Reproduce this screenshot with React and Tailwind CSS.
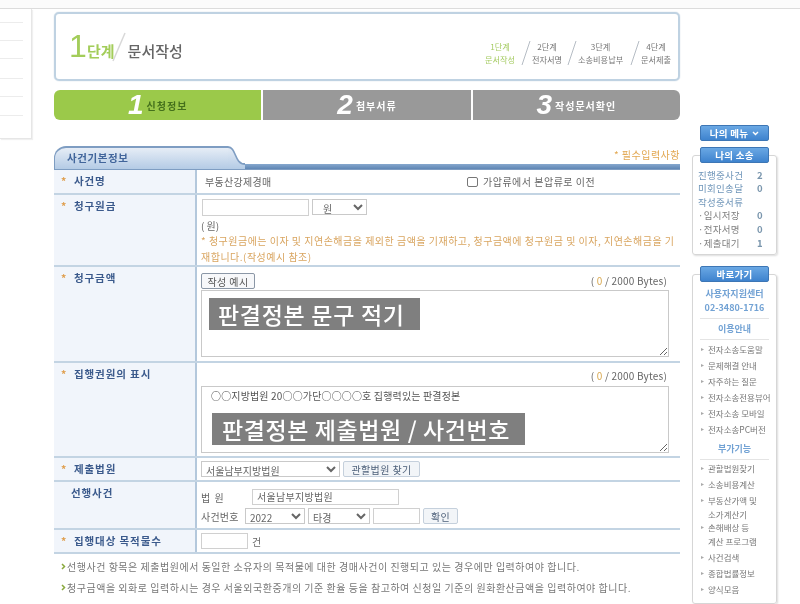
const FONT = '"Noto Sans CJK KR", "Noto Sans", sans-serif';

function Label({ star = true, children }) {
  return (
    <div className="w-[143px] shrink-0 bg-[#f1f5fb] border-r-2 border-[#b4c8dc] pl-[7px] pt-[3px] text-[10.5px] leading-[15px] font-bold tracking-[0.9px] text-[#3b5a8c] flex">
      <span className={star ? "text-[#e0a050] w-[13px]" : "w-[10px]"}>{star ? "*" : ""}</span>
      <span>{children}</span>
    </div>
  );
}

function Row({ h, label, star, children }) {
  return (
    <div className="flex border-b-2 border-[#c3d4e3]" style={{ height: h }}>
      <Label star={star}>{label}</Label>
      <div className="flex-1 min-w-0 pl-[4px]">{children}</div>
    </div>
  );
}

function Counter() {
  return (
    <div className="text-right pr-[13px] h-[17px] text-[10px] leading-[15px] text-[#666] tracking-[0.2px]">
      ( <span className="text-[#d8a850]">0</span> / 2000 Bytes)
    </div>
  );
}

function Select({ w, children, pad = 0 }) {
  return (
    <select className="h-[16px] border border-[#c9c9c9] bg-white text-[10px] leading-[14px] text-[#666] text-left" style={{ width: w, paddingLeft: pad }}>
      <option>{children}</option>
    </select>
  );
}

function Btn({ children, w }) {
  return (
    <button className="h-[16px] border border-[#c5d0dc] rounded-[2px] bg-[#f2f5f8] text-[10px] leading-[13px] text-[#4c5f78] tracking-[0.4px] text-center" style={{ width: w }}>
      {children}
    </button>
  );
}

function Step({ top, bottom, active, w }) {
  return (
    <div className={"shrink-0 text-center whitespace-nowrap text-[8.2px] leading-[12.5px] " + (active ? "text-[#a5cb62]" : "text-[#777]")} style={{ width: w }}>
      <div>{top}</div>
      <div>{bottom}</div>
    </div>
  );
}

function Slash({ cls }) {
  return (
    <svg width="12" height="26" viewBox="0 0 12 26" className={"shrink-0 " + cls}>
      <path d="M10 1 L2 25" stroke="#b5bcc4" strokeWidth="1" fill="none" />
    </svg>
  );
}

function Tab({ num, label, active, cls }) {
  return (
    <div className={"flex-1 h-full flex items-center justify-center gap-[3px] " + (active ? "bg-[#9bc94a] " : "bg-[#999999] ") + cls}>
      <span className="text-[28px] leading-[28px] font-bold italic text-white" style={{ fontFamily: '"Liberation Sans", sans-serif' }}>{num}</span>
      <span className={"text-[10px] font-bold tracking-[1px] " + (active ? "text-[#44701c]" : "text-white")}>{label}</span>
    </div>
  );
}

function SideTitle({ children, chevron, cls = "" }) {
  return (
    <div className={"relative z-10 mx-auto w-[69px] h-[16px] rounded-[2px] border border-[#3d76b5] bg-gradient-to-b from-[#6aa8e4] to-[#3e83ce] flex items-center justify-center gap-[4px] text-[9.5px] font-bold tracking-[0.3px] text-white " + cls}>
      {children}
      {chevron && (
        <svg width="7" height="5" viewBox="0 0 7 5"><path d="M1 1l2.5 2.5L6 1" stroke="#fff" strokeWidth="1.4" fill="none" /></svg>
      )}
    </div>
  );
}

function Stat({ label, value, blue }) {
  return (
    <div className={"flex h-[13.6px] items-center text-[9.5px] tracking-[0.3px] " + (blue ? "text-[#6d94b8]" : "text-[#808080]")}>
      <span className="w-[59px]">{label}</span>
      {value && <span className="font-bold text-[#7a96ad]">{value}</span>}
    </div>
  );
}

function LinkItem({ children, h = 16 }) {
  return (
    <div className="flex text-[8.5px] leading-[14px] text-[#777] pl-[8px]" style={{ height: h, paddingTop: 1 }}>
      <span className="w-[7px] text-[#aaa] text-[6px]">▸</span>
      <span className="whitespace-pre-line">{children}</span>
    </div>
  );
}

function SideHead({ children }) {
  return (
    <div className="mx-[7px] h-[21px] border-b border-[#e4e4e4] flex items-center justify-center text-[9px] font-bold text-[#72a2d4]">
      {children}
    </div>
  );
}

function Note({ children }) {
  return (
    <div className="flex items-center h-[21px]">
      <svg width="5" height="7" viewBox="0 0 5 7" className="shrink-0 mr-[1px]">
        <path d="M1 1l2.5 2.5L1 6" stroke="#8aa93e" strokeWidth="1.5" fill="none" />
      </svg>
      <span>{children}</span>
    </div>
  );
}

export default function App() {
  return (
    <div className="w-[800px] h-[604px] overflow-hidden bg-white blur-[0.45px]" style={{ fontFamily: FONT }}>
      <div className="h-[9px] border-b border-[#dcdcdc] bg-[#fbfbfb]" />
      <div className="flex">
        <nav className="w-[32px] h-[130px] shrink-0 bg-white border-r border-b border-[#e6e6e6] shadow-[1px_1px_1px_#f0f0f0]">
          {[14, 18, 18, 20, 18, 19].map((h, i) => (
            <div key={i} className="border-b border-[#ececec] mr-[8px]" style={{ height: h }} />
          ))}
        </nav>

        <main className="ml-[22px] w-[626px] shrink-0">
          <header className="mt-[3px] h-[69px] rounded-[5px] border-2 border-[#bfd2e2] flex items-center justify-between pl-[13px] pr-[7px] shadow-[0_0_1px_#9fb8cc]">
            <div className="flex items-end h-[34px] -mt-[1px]">
              <span className="text-[32px] leading-[34px] text-[#a3cd5a] w-[14px]" style={{ fontFamily: '"Liberation Sans", sans-serif' }}>1</span>
              <span className="ml-[4px] text-[15px] leading-[24px] font-bold text-[#a3cd5a]">단계</span>
              <svg width="14" height="30" viewBox="0 0 14 30" className="mb-[1px] -ml-[3px]">
                <path d="M13 1 L1 29" stroke="#d8d8d8" strokeWidth="1.5" fill="none" />
              </svg>
              <span className="ml-[2px] text-[15px] leading-[24px] font-medium text-[#666]">문서작성</span>
            </div>
            <div className="flex items-center mt-[12px]">
              <Step top="1단계" bottom="문서작성" active w={30} />
              <Slash cls="ml-[5px]" />
              <Step top="2단계" bottom="전자서명" w={30} />
              <Slash cls="ml-[4px]" />
              <Step top="3단계" bottom="소송비용납부" w={45} />
              <Slash cls="ml-[6px]" />
              <Step top="4단계" bottom="문서제출" w={30} />
            </div>
          </header>

          <div className="mt-[9px] h-[30px] flex gap-[2px]">
            <Tab num="1" label="신청정보" active cls="rounded-l-[6px]" />
            <Tab num="2" label="첨부서류" cls="" />
            <Tab num="3" label="작성문서확인" cls="rounded-r-[6px]" />
          </div>

          <section className="mt-[25px]">
            <div className="relative flex h-[24px] items-end">
              <div className="w-[174px] h-[23px] rounded-tl-[12px] border-t-2 border-l border-[#7e9dc2] bg-gradient-to-b from-[#e6edf6] to-[#b4cbe5] pl-[12px] text-[10.5px] leading-[20px] font-bold tracking-[0.6px] text-[#41659b]">
                사건기본정보
              </div>
              <svg width="17" height="23" viewBox="0 0 20 23" className="shrink-0" preserveAspectRatio="none">
                <defs>
                  <linearGradient id="tabfill" x1="0" y1="0" x2="0" y2="1">
                    <stop offset="0" stopColor="#e6edf6" />
                    <stop offset="1" stopColor="#b4cbe5" />
                  </linearGradient>
                </defs>
                <path d="M0 1 C10 1 7 18 20 18 L20 23 L0 23 Z" fill="url(#tabfill)" />
                <path d="M0 1 C10 1 7 18 20 18" stroke="#7e9dc2" strokeWidth="1.8" fill="none" />
              </svg>
              <div className="flex-1 h-[5px] bg-gradient-to-b from-[#86a8ce] to-[#5f86b4]" />
              <div className="absolute right-0 top-[3px] text-[10px] leading-[14px] tracking-[0.5px] text-[#e2a750]">* 필수입력사항</div>
            </div>
            <div className="h-[1px] bg-[#7e9dc2]" />

            <Row h={25} label="사건명">
              <div className="flex items-center h-full text-[10px] tracking-[0.3px] text-[#666]">
                <span className="w-[266px] pl-[4px]">부동산강제경매</span>
                <span className="w-[11px] h-[10px] rounded-[2px] border border-[#777] mr-[5px]" />
                <span className="tracking-[0.5px]">가압류에서 본압류로 이전</span>
              </div>
            </Row>

            <Row h={72} label="청구원금">
              <div className="pt-[4px] h-full">
                <div className="flex gap-[3px]">
                  <input className="w-[107px] h-[17px] border border-[#d0d0d0] ml-[1px]" />
                  <Select w={55} pad={6}>원</Select>
                </div>
                <div className="mt-[3px] text-[10px] leading-[14px] text-[#666]">( 원)</div>
                <div className="pr-[3px] text-[10px] leading-[15.5px] tracking-[0.49px] text-[#d9a560]">
                  * 청구원금에는 이자 및 지연손해금을 제외한 금액을 기재하고, 청구금액에 청구원금 및 이자, 지연손해금을 기재합니다.(작성예시 참조)
                </div>
              </div>
            </Row>

            <Row h={96} label="청구금액">
              <div className="pt-[6px] h-full">
                <div className="flex justify-between h-[17px]">
                  <button className="w-[54px] h-[16px] border border-[#8b97a6] rounded-[2px] bg-[#f7f8fa] text-[10px] leading-[13px] tracking-[0.4px] text-[#555]">작성 예시</button>
                  <Counter />
                </div>
                <div className="relative w-[468px] h-[67px]">
                  <textarea className="block w-full h-full border border-[#c9c9c9] bg-white" />
                  <div className="absolute left-[8px] top-[8px] w-[211px] h-[32px] bg-[#7f7f7f] text-white text-[23px] leading-[32px] font-medium pl-[9px] tracking-[0.7px] whitespace-nowrap">판결정본 문구 적기</div>
                </div>
              </div>
            </Row>

            <Row h={95} label="집행권원의 표시">
              <div className="pt-[5px] h-full">
                <Counter />
                <div className="relative w-[468px] h-[67px] mt-[1px]">
                  <textarea
                    className="block w-full h-full border border-[#c9c9c9] bg-white pl-[9px] pt-[1px] text-[10px] leading-[16px] tracking-[0.15px] text-[#555] resize-y"
                    defaultValue="○○지방법원 20○○가단○○○○호 집행력있는 판결정본"
                  />
                  <div className="absolute left-[11px] top-[27px] w-[313px] h-[32px] bg-[#7f7f7f] text-white text-[23px] leading-[32px] font-medium pl-[10px] tracking-[0.6px] whitespace-nowrap">판결정본 제출법원 / 사건번호</div>
                </div>
              </div>
            </Row>

            <Row h={24} label="제출법원">
              <div className="flex items-center h-full gap-[3px]">
                <Select w={139}>서울남부지방법원</Select>
                <Btn w={77}>관할법원 찾기</Btn>
              </div>
            </Row>

            <Row h={48} star={false} label="선행사건">
              <div className="pt-[7px]">
                <div className="flex items-center h-[16px] text-[10px] text-[#666]">
                  <span className="w-[51px] tracking-[1px]">법 원</span>
                  <div className="w-[147px] h-[16px] border border-[#d0d0d0] pl-[4px] text-[10px] leading-[14px] tracking-[0.3px]">서울남부지방법원</div>
                </div>
                <div className="flex items-center h-[16px] mt-[3px] gap-[3px] text-[10px] text-[#666]">
                  <span className="w-[41px] tracking-[0.2px]">사건번호</span>
                  <Select w={60}>2022</Select>
                  <Select w={62}>타경</Select>
                  <input className="w-[47px] h-[16px] border border-[#d0d0d0]" />
                  <Btn w={35}>확인</Btn>
                </div>
              </div>
            </Row>

            <Row h={24} label="집행대상 목적물수">
              <div className="flex items-center h-full text-[10px] text-[#666]">
                <input className="w-[47px] h-[16px] border border-[#d0d0d0]" />
                <span className="ml-[4px]">건</span>
              </div>
            </Row>

            <div className="mt-[2px] pl-[7px] text-[10px] tracking-[0.52px] text-[#777] whitespace-nowrap">
              <Note>선행사건 항목은 제출법원에서 동일한 소유자의 목적물에 대한 경매사건이 진행되고 있는 경우에만 입력하여야 합니다.</Note>
              <Note>청구금액을 외화로 입력하시는 경우 서울외국환중개의 기준 환율 등을 참고하여 신청일 기준의 원화환산금액을 입력하여야 합니다.</Note>
            </div>
          </section>
        </main>

        <aside className="ml-[12px] w-[85px] shrink-0 pt-[116px]">
          <SideTitle chevron>나의 메뉴</SideTitle>
          <SideTitle cls="mt-[6px]">나의 소송</SideTitle>
          <div className="-mt-[8px] h-[100px] rounded-[3px] border border-[#d6d6d6] shadow-[1px_1px_2px_#ddd] pl-[5px] pt-[12px]">
            <Stat blue label="진행중사건" value="2" />
            <Stat blue label="미회인송달" value="0" />
            <Stat blue label="작성중서류" />
            <Stat label="·임시저장" value="0" />
            <Stat label="·전자서명" value="0" />
            <Stat label="·제출대기" value="1" />
          </div>

          <SideTitle cls="mt-[11px]">바로가기</SideTitle>
          <div className="-mt-[8px] h-[330px] rounded-[3px] border border-[#d6d6d6] shadow-[1px_1px_2px_#ddd] pt-[12px]">
            <div className="mx-[7px] h-[32px] border-b border-[#e4e4e4] text-center text-[9px] leading-[14px] font-bold text-[#72a2d4]">
              <div>사용자지원센터</div>
              <div>02-3480-1716</div>
            </div>
            <SideHead>이용안내</SideHead>
            <div className="pt-[1px] pb-[2px]">
              <LinkItem>전자소송도움말</LinkItem>
              <LinkItem>문제해결 안내</LinkItem>
              <LinkItem>자주하는 질문</LinkItem>
              <LinkItem>전자소송전용뷰어</LinkItem>
              <LinkItem>전자소송 모바일</LinkItem>
              <LinkItem>전자소송PC버전</LinkItem>
            </div>
            <SideHead>부가기능</SideHead>
            <div>
              <LinkItem>관할법원찾기</LinkItem>
              <LinkItem>소송비용계산</LinkItem>
              <LinkItem h={27}>{"부동산가액 및\n소가계산기"}</LinkItem>
              <LinkItem h={30}>{"손해배상 등\n계산 프로그램"}</LinkItem>
              <LinkItem>사건검색</LinkItem>
              <LinkItem>종합법률정보</LinkItem>
              <LinkItem>양식모음</LinkItem>
            </div>
          </div>
        </aside>
      </div>
    </div>
  );
}
